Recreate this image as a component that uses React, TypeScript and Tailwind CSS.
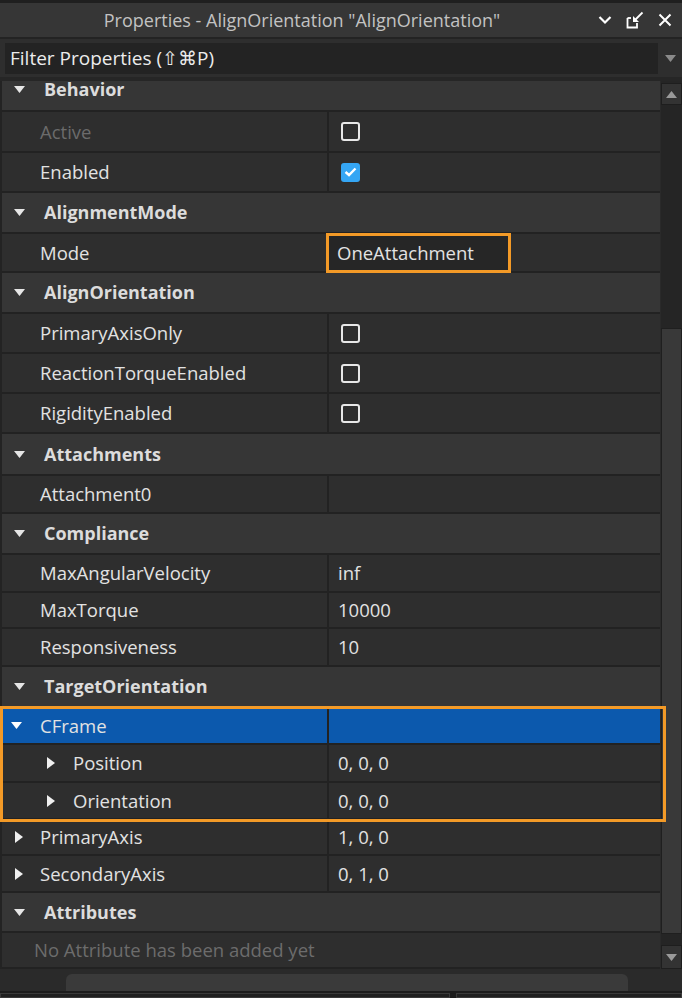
import React from "react"

type Row =
  | { kind: "header"; label: string; h: number }
  | {
      kind: "prop"
      label: string
      h: number
      value?: string
      check?: boolean
      disabled?: boolean
      arrow?: "right" | "down"
      indent?: boolean
      selected?: boolean
      modeBox?: boolean
    }

const FONT = { fontFamily: '"Open Sans", "Noto Sans", sans-serif' }

function DownTri({ className = "" }: { className?: string }) {
  return (
    <svg width="11" height="7" viewBox="0 0 11 7" className={className}>
      <path d="M0 0 L11 0 L5.5 7 Z" fill="currentColor" />
    </svg>
  )
}

function RightTri() {
  return (
    <svg width="8" height="12" viewBox="0 0 8 12">
      <path d="M0 0 L8 6 L0 12 Z" fill="currentColor" />
    </svg>
  )
}

function Checkbox({ checked }: { checked: boolean }) {
  if (checked) {
    return (
      <div className="flex h-[19px] w-[19px] items-center justify-center rounded-[3px] bg-[#35a6f4]">
        <svg width="13" height="10" viewBox="0 0 13 10">
          <path d="M1.5 5 L5 8 L11.5 1.5" stroke="white" strokeWidth="2.4" fill="none" />
        </svg>
      </div>
    )
  }
  return <div className="h-[19px] w-[19px] rounded-[3px] border-2 border-[#e8e8e8]" />
}

const TOP: Row[] = [
  { kind: "prop", label: "Active", h: 41, check: false, disabled: true },
  { kind: "prop", label: "Enabled", h: 40, check: true },
  { kind: "header", label: "AlignmentMode", h: 41 },
  { kind: "prop", label: "Mode", h: 39, value: "OneAttachment", modeBox: true },
  { kind: "header", label: "AlignOrientation", h: 41 },
  { kind: "prop", label: "PrimaryAxisOnly", h: 40, check: false },
  { kind: "prop", label: "ReactionTorqueEnabled", h: 40, check: false },
  { kind: "prop", label: "RigidityEnabled", h: 40, check: false },
  { kind: "header", label: "Attachments", h: 42 },
  { kind: "prop", label: "Attachment0", h: 38, value: "" },
  { kind: "header", label: "Compliance", h: 41 },
  { kind: "prop", label: "MaxAngularVelocity", h: 38, value: "inf" },
  { kind: "prop", label: "MaxTorque", h: 36, value: "10000" },
  { kind: "prop", label: "Responsiveness", h: 38, value: "10" },
  { kind: "header", label: "TargetOrientation", h: 41 },
]

const CFRAME: Row[] = [
  { kind: "prop", label: "CFrame", h: 37, arrow: "down", selected: true, value: "" },
  { kind: "prop", label: "Position", h: 38, arrow: "right", indent: true, value: "0, 0, 0" },
  { kind: "prop", label: "Orientation", h: 37, arrow: "right", indent: true, value: "0, 0, 0" },
]

const BOTTOM: Row[] = [
  { kind: "prop", label: "PrimaryAxis", h: 36, arrow: "right", value: "1, 0, 0" },
  { kind: "prop", label: "SecondaryAxis", h: 37, arrow: "right", value: "0, 1, 0" },
  { kind: "header", label: "Attributes", h: 40 },
]

function Header({ label, h }: { label: string; h: number }) {
  return (
    <div
      className="flex items-center border-b-2 border-[#222222] bg-[#363636] text-[#dcdcdc]"
      style={{ height: h }}
    >
      <DownTri className="ml-[12px] mr-[19px] text-[#e6e6e6]" />
      <span className="text-[18px] font-bold">{label}</span>
    </div>
  )
}

function RowView({ row }: { row: Row }) {
  if (row.kind === "header") return <Header label={row.label} h={row.h} />
  const bg = row.selected ? "bg-[#0c59ad]" : "bg-[#2e2e2e]"
  return (
    <div className={`relative grid grid-cols-[327px_1fr] border-b-2 border-[#222222] ${bg}`} style={{ height: row.h }}>
      <div className="flex items-center border-r-2 border-[#222222]">
        {row.arrow === "down" && <DownTri className="ml-[9px] mr-[18px] text-white" />}
        {row.arrow === "right" && (
          <span className={`${row.indent ? "ml-[45px] mr-[18px]" : "ml-[13px] mr-[17px]"} text-[#f0f0f0]`}>
            <RightTri />
          </span>
        )}
        <span
          className={`${row.arrow ? "" : "ml-[38px]"} text-[18.5px] ${
            row.disabled ? "text-[#6b6b6b]" : "text-[#e2e2e2]"
          }`}
        >
          {row.label}
        </span>
      </div>
      <div className="flex items-center pl-[9px] text-[18.5px] text-[#e2e2e2]">
        {row.check !== undefined ? (
          <div className="ml-[3px]">
            <Checkbox checked={row.check} />
          </div>
        ) : (
          <span>{row.value}</span>
        )}
      </div>
      {row.modeBox && (
        <div className="absolute left-[324px] top-[-1px] flex h-[40px] w-[185px] items-center border-[3px] border-[#f39a27] bg-[#262626] pl-[8px] text-[18.5px] text-[#e2e2e2]">
          {row.value}
        </div>
      )}
    </div>
  )
}

export default function App() {
  return (
    <div className="flex h-[998px] w-[682px] flex-col overflow-hidden bg-[#2a2a2a]" style={FONT}>
      {/* title bar */}
      <div className="h-[3px] bg-[#1f1f1f]" />
      <div className="relative flex h-[36px] items-center justify-center border-b-2 border-[#232323] bg-[#363636]">
        <span className="pr-[78px] text-[18px] text-[#c2c2c2]">
          Properties - AlignOrientation "AlignOrientation"
        </span>
        <div className="absolute right-[10px] top-0 flex h-full items-center gap-[14px] text-white">
          <svg width="14" height="10" viewBox="0 0 14 10">
            <path d="M1.5 2 L7 7.5 L12.5 2" stroke="white" strokeWidth="2.2" fill="none" />
          </svg>
          <svg width="18" height="18" viewBox="0 0 18 18">
            <path d="M1.5 7 V16.5 H11 V12" stroke="white" strokeWidth="1.8" fill="none" />
            <path d="M1.5 7 H5" stroke="white" strokeWidth="1.8" fill="none" />
            <path d="M16.5 1.5 L8.5 9.5" stroke="white" strokeWidth="1.8" />
            <path d="M7 5 V11 H13 Z" fill="white" />
          </svg>
          <svg width="14" height="14" viewBox="0 0 14 14">
            <path d="M1.5 1.5 L12.5 12.5 M12.5 1.5 L1.5 12.5" stroke="white" strokeWidth="2" />
          </svg>
        </div>
      </div>

      {/* filter */}
      <div className="flex h-[38px] items-center bg-[#2e2e2e] pl-[5px]">
        <div className="flex h-[31px] flex-1 items-center bg-[#232323] pl-[5px] text-[19px] text-[#ececec]">
          Filter Properties (⇧⌘P)
        </div>
        <div className="flex w-[24px] justify-center">
          <DownTri className="text-[#8a8a8a]" />
        </div>
      </div>
      <div className="h-[4px] bg-[#262626]" />

      {/* list + scrollbar */}
      <div className="flex h-[888px]">
        <div className="relative z-10 flex w-[660px] flex-col">
          <div className="h-[888px] overflow-x-visible overflow-y-clip border-l-2 border-[#232323]">
            {/* list is scrolled a little, so the first header is partly hidden */}
            <div className="flex h-[31px] items-start border-b-2 border-[#222222] bg-[#363636] text-[#dcdcdc]">
              <DownTri className="ml-[12px] mr-[19px] mt-[5px] text-[#e6e6e6]" />
              <span className="text-[18px] font-bold leading-[17px]">Behavior</span>
            </div>
            {TOP.map((r) => (
              <RowView key={r.label} row={r} />
            ))}
            <div className="relative">
              {CFRAME.map((r) => (
                <RowView key={r.label} row={r} />
              ))}
              <div className="pointer-events-none absolute bottom-[-2px] left-[-2px] right-[-6px] top-[-2px] z-10 border-[3px] border-[#f39a27]" />
            </div>
            {BOTTOM.map((r) => (
              <RowView key={r.label} row={r} />
            ))}
            <div className="flex h-[36px] items-center border-b-2 border-[#222222] bg-[#2e2e2e] pl-[32px] text-[18.5px] text-[#6c6c6c]">
              No Attribute has been added yet
            </div>
          </div>
        </div>

        {/* vertical scrollbar */}
        <div className="ml-[1px] flex w-[21px] flex-col bg-[#252525]">
          <div className="mt-[2px] flex h-[22px] items-center justify-center border border-[#1e1e1e] bg-[#333333]">
            <svg width="11" height="7" viewBox="0 0 11 7">
              <path d="M0 7 L11 7 L5.5 0 Z" fill="#9a9a9a" />
            </svg>
          </div>
          <div className="h-[223px]" />
          <div className="h-[606px] border border-[#1f1f1f] bg-[#393939]" />
          <div className="flex-1" />
          <div className="flex h-[24px] items-center justify-center border border-[#1e1e1e] bg-[#333333]">
            <DownTri className="text-[#9a9a9a]" />
          </div>
        </div>
      </div>

      {/* horizontal scrollbar */}
      <div className="flex h-[22px] bg-[#2a2a2a]">
        <div className="ml-[66px] mt-[5px] h-[17px] w-[562px] rounded-t-[6px] bg-[#3a3a3a]" />
      </div>
      <div className="flex flex-1 gap-[6px] bg-[#1c1c1c] pt-[2px]">
        <div className="w-[450px] border border-[#3a3a3a] bg-[#202020]" />
        <div className="flex-1 border border-[#3a3a3a] bg-[#202020]" />
      </div>
    </div>
  )
}
